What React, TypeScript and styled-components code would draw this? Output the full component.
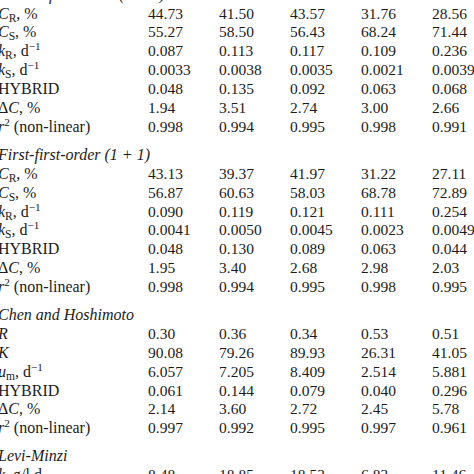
import React from "react";
import styled, { createGlobalStyle } from "styled-components";

const GlobalStyle = createGlobalStyle`
  html, body {
    margin: 0;
    padding: 0;
    background: #ffffff;
  }
  body {
    width: 474px;
    height: 474px;
    overflow: hidden;
  }
`;

type RowData = { label: React.ReactNode; values: string[] };
type Section = { title: React.ReactNode; rows: RowData[] };

const Sub = styled.sub`
  font-style: normal;
  font-size: 0.72em;
  vertical-align: -0.3em;
  line-height: 0;
`;

const Sup = styled.sup`
  font-style: normal;
  font-size: 0.7em;
  vertical-align: 0.5em;
  line-height: 0;
`;

const dInv = (
  <>
    d<Sup>−1</Sup>
  </>
);

const cR = (
  <>
    <i>C</i>
    <Sub>R</Sub>, %
  </>
);
const cS = (
  <>
    <i>C</i>
    <Sub>S</Sub>, %
  </>
);
const kR = (
  <>
    <i>k</i>
    <Sub>R</Sub>, {dInv}
  </>
);
const kS = (
  <>
    <i>k</i>
    <Sub>S</Sub>, {dInv}
  </>
);
const dC = (
  <>
    Δ<i>C</i>, %
  </>
);
const r2 = (
  <>
    <i>r</i>
    <Sup>2</Sup> (non-linear)
  </>
);

const sections: Section[] = [
  {
    title: "Double first-order (1 + 1)",
    rows: [
      { label: cR, values: ["44.73", "41.50", "43.57", "31.76", "28.56"] },
      { label: cS, values: ["55.27", "58.50", "56.43", "68.24", "71.44"] },
      { label: kR, values: ["0.087", "0.113", "0.117", "0.109", "0.236"] },
      { label: kS, values: ["0.0033", "0.0038", "0.0035", "0.0021", "0.0039"] },
      { label: "HYBRID", values: ["0.048", "0.135", "0.092", "0.063", "0.068"] },
      { label: dC, values: ["1.94", "3.51", "2.74", "3.00", "2.66"] },
      { label: r2, values: ["0.998", "0.994", "0.995", "0.998", "0.991"] },
    ],
  },
  {
    title: "First-first-order (1 + 1)",
    rows: [
      { label: cR, values: ["43.13", "39.37", "41.97", "31.22", "27.11"] },
      { label: cS, values: ["56.87", "60.63", "58.03", "68.78", "72.89"] },
      { label: kR, values: ["0.090", "0.119", "0.121", "0.111", "0.254"] },
      { label: kS, values: ["0.0041", "0.0050", "0.0045", "0.0023", "0.0049"] },
      { label: "HYBRID", values: ["0.048", "0.130", "0.089", "0.063", "0.044"] },
      { label: dC, values: ["1.95", "3.40", "2.68", "2.98", "2.03"] },
      { label: r2, values: ["0.998", "0.994", "0.995", "0.998", "0.995"] },
    ],
  },
  {
    title: "Chen and Hoshimoto",
    rows: [
      { label: <i>R</i>, values: ["0.30", "0.36", "0.34", "0.53", "0.51"] },
      { label: <i>K</i>, values: ["90.08", "79.26", "89.93", "26.31", "41.05"] },
      {
        label: (
          <>
            <i>μ</i>
            <Sub>m</Sub>, {dInv}
          </>
        ),
        values: ["6.057", "7.205", "8.409", "2.514", "5.881"],
      },
      { label: "HYBRID", values: ["0.061", "0.144", "0.079", "0.040", "0.296"] },
      { label: dC, values: ["2.14", "3.60", "2.72", "2.45", "5.78"] },
      { label: r2, values: ["0.997", "0.992", "0.995", "0.997", "0.961"] },
    ],
  },
  {
    title: "Levi-Minzi",
    rows: [
      {
        label: (
          <>
            <i>k</i>, g/l d
          </>
        ),
        values: ["8.48", "18.85", "18.53", "6.83", "11.46"],
      },
    ],
  },
];

// the table is cropped at the top and on the left, as in the screenshot
const Table = styled.div`
  margin: -23.3px 0 0 -2px;
  font-family: "Liberation Serif", "Times New Roman", serif;
  font-size: 15.5px;
  color: #1b1b1b;
`;

const Row = styled.div`
  display: grid;
  grid-template-columns: 150px repeat(5, 71px);
  height: 18.9px;
  line-height: 18.9px;
  white-space: nowrap;
`;

const TitleRow = styled.div`
  padding-top: 9px;
  height: 18.9px;
  line-height: 18.9px;
  font-size: 16px;
  font-style: italic;
  white-space: nowrap;
`;

const Label = styled.div`
  font-size: 16px;
`;

const Value = styled.div``;

export default function App() {
  return (
    <>
      <GlobalStyle />
      <Table>
        {sections.map((s, i) => (
          <div key={i}>
            <TitleRow>{s.title}</TitleRow>
            {s.rows.map((r, j) => (
              <Row key={j}>
                <Label>{r.label}</Label>
                {r.values.map((v, k) => (
                  <Value key={k}>{v}</Value>
                ))}
              </Row>
            ))}
          </div>
        ))}
      </Table>
    </>
  );
}
